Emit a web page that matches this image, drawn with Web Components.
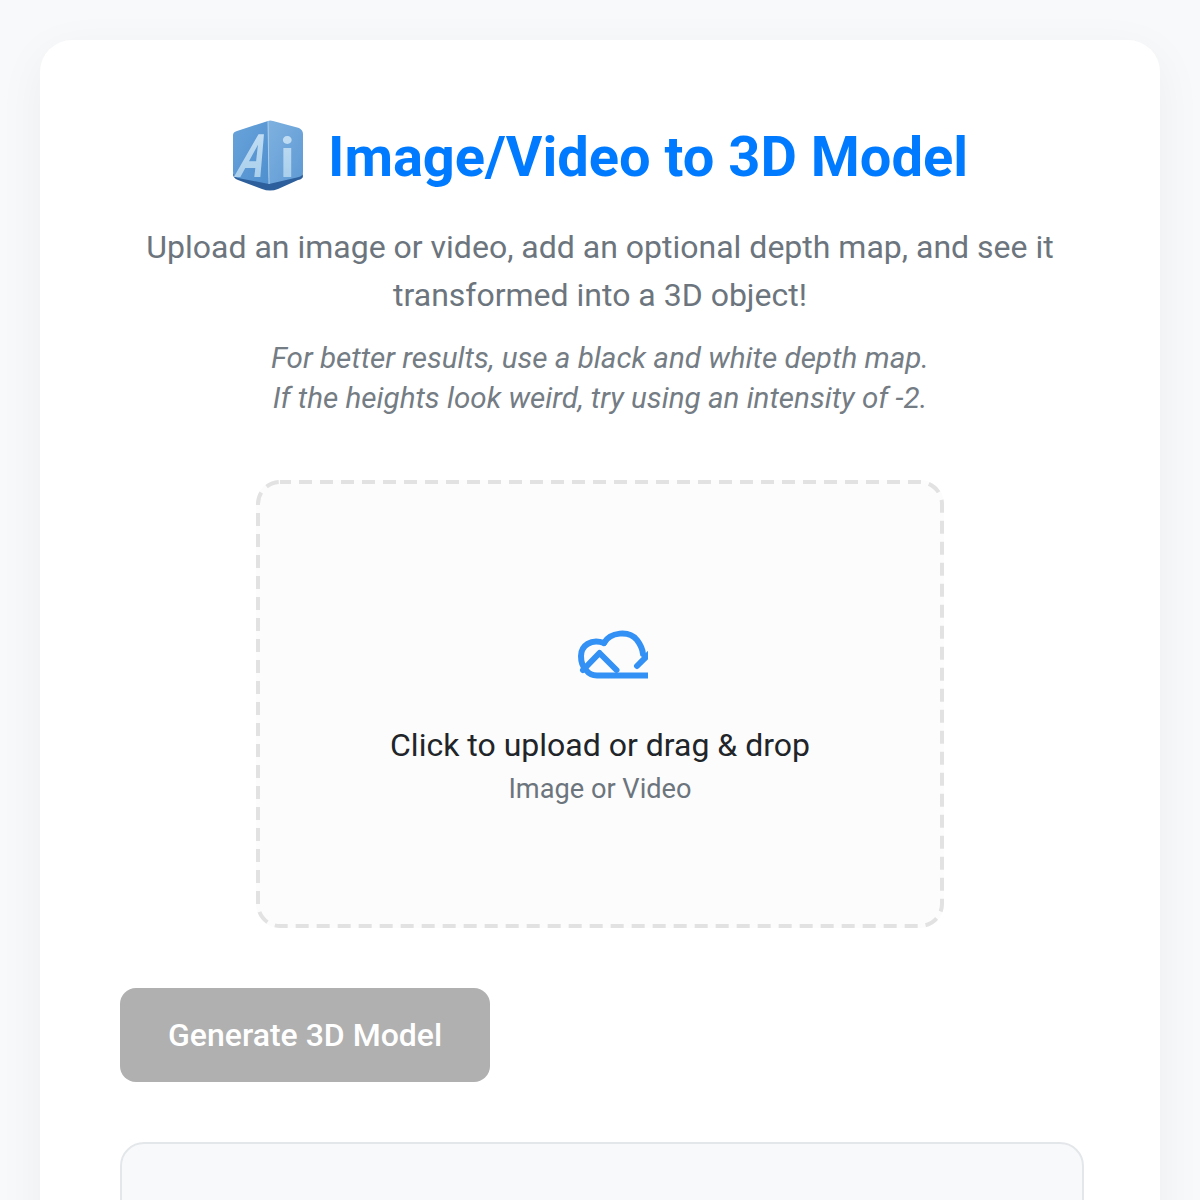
<!DOCTYPE html>
<html lang="en">
<head>
<meta charset="utf-8">
<title>Image/Video to 3D Model</title>
<style>
  html, body { margin: 0; background: #f8f9fa; }
  body { font-family: Roboto, "Liberation Sans", sans-serif; padding: 40px; box-sizing: border-box; }
</style>
</head>
<body>
<app-card>
  <app-header>
    <span slot="title">Image/Video to 3D Model</span>
    <span slot="lead">Upload an image or video, add an optional depth map, and see it transformed into a 3D object!</span>
    <span slot="note">For better results, use a black and white depth map.<br>If the heights look weird, try using an intensity of -2.</span>
  </app-header>
  <drop-zone>
    <span slot="label">Click to upload or drag &amp; drop</span>
    <span slot="hint">Image or Video</span>
  </drop-zone>
  <generate-button>Generate 3D Model</generate-button>
  <result-panel></result-panel>
</app-card>

<script>
class AppCard extends HTMLElement {
  constructor() {
    super();
    this.attachShadow({ mode: 'open' });
    this.shadowRoot.innerHTML = `
      <style>
        :host {
          display: block;
          background: #fff;
          border-radius: 32px;
          padding: 78px 80px 60px;
          box-shadow: 0 12px 48px rgba(0, 0, 0, 0.05);
        }
      </style>
      <slot></slot>
    `;
  }
}

class LogoCube extends HTMLElement {
  constructor() {
    super();
    this.attachShadow({ mode: 'open' });
    this.shadowRoot.innerHTML = `
      <style>
        :host { display: block; width: 76px; height: 76px; flex: none; }
        svg { display: block; }
        text { font-family: Roboto, "Liberation Sans", sans-serif; font-weight: 700; }
      </style>
      <svg width="76" height="76" viewBox="0 0 76 76">
        <defs>
          <linearGradient id="l" x1="0" y1="0" x2="1" y2="1">
            <stop offset="0" stop-color="#69a3da"/><stop offset="1" stop-color="#4f8fcf"/>
          </linearGradient>
          <linearGradient id="r" x1="0" y1="0" x2="1" y2="1">
            <stop offset="0" stop-color="#7eb1e0"/><stop offset="1" stop-color="#5f9ad4"/>
          </linearGradient>
          <linearGradient id="t" x1="0" y1="0" x2="0" y2="1">
            <stop offset="0" stop-color="#c6e0f4"/><stop offset="1" stop-color="#a3cbea"/>
          </linearGradient>
        </defs>
        <path d="M3 54 L38 60 L70 54 L71 58 Q71 61 66 62 L46 71 Q38 74 30 71 L6 62 Q1 60 1 56Z" fill="#2c5f9b"/>
        <path d="M1 17 Q1 14 5 13 L36 3 L37 66 L6 60 Q1 59 1 54Z" fill="url(#l)"/>
        <path d="M36 3 Q38 2 41 3 L67 10 Q71 12 71 16 L71 54 Q71 58 67 59 L37 66Z" fill="url(#r)"/>
        <path d="M36 3 L37 66" stroke="#a9cdea" stroke-width="1" fill="none"/>
        <text transform="translate(4 58.7) skewX(-12) scale(.68 1)" font-size="60" fill="url(#t)" font-style="italic">A</text>
        <text x="48" y="58.7" font-size="55" fill="url(#t)">i</text>
      </svg>
    `;
  }
}

class AppHeader extends HTMLElement {
  constructor() {
    super();
    this.attachShadow({ mode: 'open' });
    this.shadowRoot.innerHTML = `
      <style>
        :host { display: block; text-align: center; }
        .title {
          display: flex;
          align-items: center;
          justify-content: center;
          gap: 20px;
          height: 76px;
          margin-bottom: 29px;
          color: #007bff;
          font-size: 56px;
          font-weight: 700;
          line-height: 76px;
        }
        ::slotted([slot="title"]) { margin-top: 2px; }
        .lead {
          color: #6c757d;
          font-size: 32px;
          line-height: 48px;
          margin-bottom: 19px;
        }
        .note {
          color: #747c84;
          font-size: 29.6px;
          font-style: italic;
          line-height: 40px;
        }
      </style>
      <div class="title"><logo-cube></logo-cube><slot name="title"></slot></div>
      <div class="lead"><slot name="lead"></slot></div>
      <div class="note"><slot name="note"></slot></div>
    `;
  }
}

class DropZone extends HTMLElement {
  constructor() {
    super();
    this.attachShadow({ mode: 'open' });
    this.shadowRoot.innerHTML = `
      <style>
        :host {
          position: relative;
          display: flex;
          flex-direction: column;
          align-items: center;
          justify-content: center;
          box-sizing: border-box;
          width: 688px;
          height: 448px;
          margin: 62px auto 60px;
          padding-top: 28px;
          background: #fcfcfc;
          border-radius: 24px;
          text-align: center;
        }
        .dashes { position: absolute; inset: 0; display: block; }
        .icon { display: block; margin: 0 0 42px 23px; }
        .label { color: #212529; font-size: 32px; line-height: 44px; }
        .hint { color: #6c757d; font-size: 27.2px; line-height: 44px; }
      </style>
      <svg class="dashes" width="688" height="448" fill="none">
        <rect x="2" y="2" width="684" height="444" rx="22" stroke="#e2e2e2" stroke-width="4" stroke-dasharray="13 8" stroke-dashoffset="2"/>
      </svg>
      <svg class="icon" width="73" height="56" viewBox="575 625 73 56" fill="none" stroke="#3390f5" stroke-width="6" stroke-linecap="round" stroke-linejoin="round">
        <path d="M604 643 C610 632 629 630 637 640 C640 644 642.5 648 643 654"/>
        <path d="M604 643 C591 638 581 646 581 656 C581 662 583 667 586 670 C589 674 592 675.5 597 675.5 L652 675.5"/>
        <path d="M583 670 L599.5 653 L616.5 670"/>
        <path d="M637 666 L651 652"/>
      </svg>
      <div class="label"><slot name="label"></slot></div>
      <div class="hint"><slot name="hint"></slot></div>
    `;
  }
}

class GenerateButton extends HTMLElement {
  constructor() {
    super();
    this.attachShadow({ mode: 'open' });
    this.shadowRoot.innerHTML = `
      <style>
        :host { display: block; margin-bottom: 60px; }
        button {
          display: block;
          padding: 0 48px;
          height: 94px;
          border: 0;
          border-radius: 16px;
          background: #b0b0b0;
          color: #fff;
          font: 500 32px Roboto, "Liberation Sans", sans-serif;
        }
      </style>
      <button disabled><slot></slot></button>
    `;
  }
}

class ResultPanel extends HTMLElement {
  constructor() {
    super();
    this.attachShadow({ mode: 'open' });
    this.shadowRoot.innerHTML = `
      <style>
        :host {
          display: block;
          width: 100%;
          height: 400px;
          background: #f8f9fa;
          border: 2px solid #e4e7ea;
          border-radius: 24px;
        }
      </style>
    `;
  }
}

customElements.define('app-card', AppCard);
customElements.define('logo-cube', LogoCube);
customElements.define('app-header', AppHeader);
customElements.define('drop-zone', DropZone);
customElements.define('generate-button', GenerateButton);
customElements.define('result-panel', ResultPanel);
</script>
</body>
</html>
